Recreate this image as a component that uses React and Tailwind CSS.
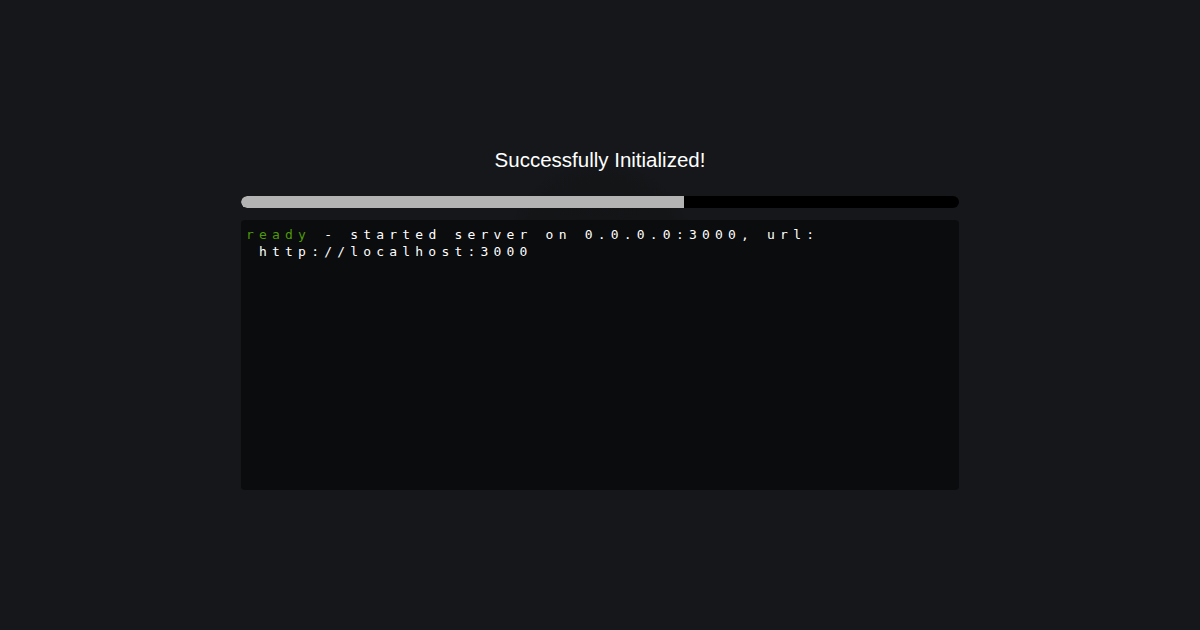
export default function App() {
  return (
    <div className="relative h-[630px] w-[1200px] overflow-hidden bg-[#16171a] flex flex-col items-center pt-[147px]">
      {/* faint logo behind the terminal */}
      <div className="absolute left-[505px] top-[160px] h-[190px] w-[190px] rounded-full bg-[radial-gradient(circle,#111214_0%,#131416_60%,transparent_72%)] opacity-60" />

      <div className="relative w-[718px] flex flex-col">
        <h1 className="text-center text-[20.5px] leading-[26px] text-white font-['Liberation_Sans',Arial,sans-serif]">
          Successfully Initialized!
        </h1>

        <div className="mt-[23px] h-[12px] w-full rounded-full bg-black overflow-hidden">
          <div className="h-full w-[443px] bg-[#b3b3b3] rounded-l-full" />
        </div>

        <div className="mt-[12px] h-[270px] w-full rounded-[4px] bg-[#0b0c0e] px-[5px] pt-[6px] font-['DejaVu_Sans_Mono',monospace] text-[13px] leading-[17px] tracking-[5.2px] text-white">
          <div className="whitespace-pre">
            <span className="text-[#4e9a06]">ready</span> - started server on 0.0.0.0:3000, url:
          </div>
          <div className="whitespace-pre"> http://localhost:3000</div>
        </div>
      </div>
    </div>
  );
}
